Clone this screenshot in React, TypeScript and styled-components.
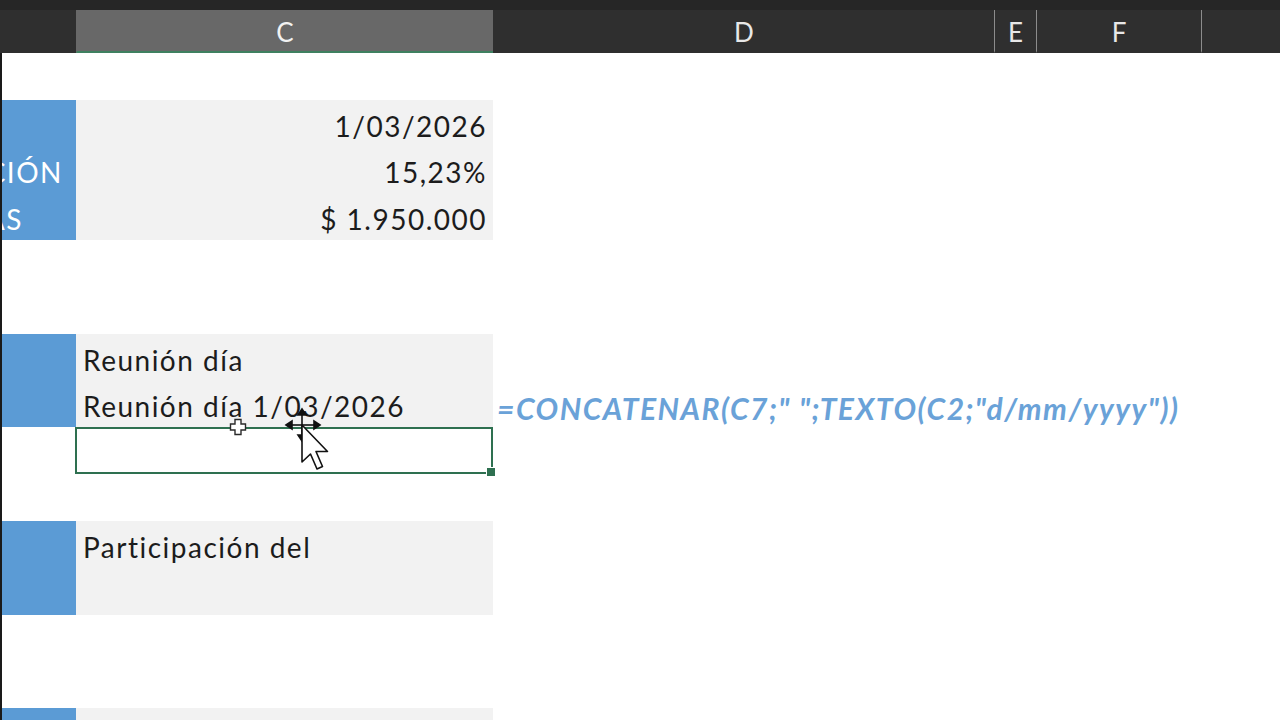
import * as React from "react";
import styled, { createGlobalStyle } from "styled-components";

const GlobalStyle = createGlobalStyle`
  html, body {
    margin: 0;
    padding: 0;
    background: #ffffff;
  }
  body {
    font-family: Lato, "Open Sans", "Liberation Sans", sans-serif;
  }
`;

const HEAD_COLUMNS = "76px 417px 501px 42px 165px 1fr";
// the sheet has a 2px black edge on the left, so its first column is 2px narrower
const SHEET_COLUMNS = "74px 417px 501px 42px 165px 1fr";
const ROW_HEIGHT = 46.8;

const Frame = styled.div`
  position: relative;
  width: 1280px;
  height: 720px;
  overflow: hidden;
  background: #ffffff;
`;

const HeaderBar = styled.div`
  display: flex;
  flex-direction: column;
  height: 53px;
  background: #2f2f2f;
`;

const TopStrip = styled.div`
  height: 10px;
  background: #262626;
`;

const HeaderRow = styled.div`
  flex: 1;
  display: grid;
  grid-template-columns: ${HEAD_COLUMNS};
`;

const ColumnHead = styled.div<{ selected?: boolean; divider?: boolean }>`
  display: flex;
  align-items: center;
  justify-content: center;
  font-family: Lato, "Open Sans", sans-serif;
  font-size: 26px;
  color: ${(p) => (p.selected ? "#f2f2f2" : "#e8e8e8")};
  background: ${(p) => (p.selected ? "#686868" : "transparent")};
  border-left: ${(p) => (p.divider ? "1px solid #8c8c8c" : "1px solid transparent")};
  border-bottom: 2px solid ${(p) => (p.selected ? "#3f8060" : "transparent")};
  box-sizing: border-box;
  padding-top: 2px;
`;

const Sheet = styled.div`
  position: relative;
  border-left: 2px solid #1a1a1a;
  height: 667px;
`;

const Row = styled.div`
  display: grid;
  grid-template-columns: ${SHEET_COLUMNS};
  height: ${ROW_HEIGHT}px;
`;

const LabelCell = styled.div<{ filled?: boolean; padRight?: number }>`
  display: flex;
  align-items: flex-end;
  justify-content: flex-end;
  padding: 0 ${(p) => p.padRight ?? 0}px 5px 0;
  overflow: hidden;
  white-space: nowrap;
  background: ${(p) => (p.filled ? "#5b9bd5" : "transparent")};
  color: #ffffff;
  font-size: 28px;
  letter-spacing: 1.5px;
  line-height: 32px;
`;

const ValueCell = styled.div<{ filled?: boolean; align?: "left" | "right"; selected?: boolean }>`
  position: relative;
  display: flex;
  align-items: flex-end;
  justify-content: ${(p) => (p.align === "right" ? "flex-end" : "flex-start")};
  padding: 0 6px 5px 7px;
  white-space: nowrap;
  box-sizing: border-box;
  background: ${(p) => (p.filled ? "#f2f2f2" : "transparent")};
  border: ${(p) => (p.selected ? "2px solid #2e7050" : "none")};
  margin-left: ${(p) => (p.selected ? "-1px" : "0")};
  color: #1c1c1c;
  font-size: 28px;
  letter-spacing: 1.5px;
  line-height: 32px;
`;

const FillHandle = styled.span`
  position: absolute;
  right: -5px;
  bottom: -5px;
  width: 8px;
  height: 8px;
  background: #2e7050;
  border: 1px solid #ffffff;
`;

const FormulaCell = styled.div`
  display: flex;
  align-items: flex-end;
  padding: 0 0 3px 4px;
  white-space: nowrap;
  overflow: visible;
  font-family: Lato, "Open Sans", sans-serif;
  font-weight: 700;
  font-style: italic;
  font-size: 30px;
  line-height: 32px;
  color: #6aa2d8;
  letter-spacing: 1.5px;
`;

const Overlay = styled.svg<{ left: number; top: number }>`
  position: absolute;
  left: ${(p) => p.left}px;
  top: ${(p) => p.top}px;
  pointer-events: none;
`;

type RowData = {
  band?: boolean;
  label?: string;
  labelPad?: number;
  value?: string;
  align?: "left" | "right";
  selected?: boolean;
  formula?: string;
};

const rows: RowData[] = [
  {},
  { band: true, value: "1/03/2026", align: "right" },
  { band: true, label: "CIÓN", labelPad: 13, value: "15,23%", align: "right" },
  { band: true, label: "AS", labelPad: 53, value: "$ 1.950.000", align: "right" },
  {},
  {},
  { band: true, value: "Reunión día" },
  {
    band: true,
    value: "Reunión día 1/03/2026",
    formula: '=CONCATENAR(C7;" ";TEXTO(C2;"d/mm/yyyy"))',
  },
  { selected: true },
  {},
  { band: true, value: "Participación del" },
  { band: true },
  {},
  {},
  { band: true },
];

function MoveCursor() {
  return (
    <Overlay left={281} top={352} width={50} height={70} viewBox="0 0 50 70">
      {/* four-way move arrows */}
      <g stroke="#111" strokeWidth="1.6" fill="#111">
        <line x1="4" y1="20" x2="36" y2="20" />
        <polygon points="3,20 9,16 9,24" />
        <polygon points="37,20 31,16 31,24" />
        <line x1="19" y1="6" x2="19" y2="34" />
        <polygon points="19,4 15,10 23,10" />
        <polygon points="19,36 15,30 23,30" />
      </g>
      {/* pointer arrow */}
      <path
        d="M19 20 L19 57 L27.5 49 L34 64 L39.5 61.5 L33 46.5 L44.5 46.5 Z"
        fill="#ffffff"
        stroke="#111"
        strokeWidth="1.6"
        strokeLinejoin="round"
      />
    </Overlay>
  );
}

function CrossCursor() {
  return (
    <Overlay left={227} top={365} width={18} height={18} viewBox="0 0 18 18">
      <path
        d="M6 1.5 H12 V6 H16.5 V12 H12 V16.5 H6 V12 H1.5 V6 H6 Z"
        fill="#ffffff"
        stroke="#2a2a2a"
        strokeWidth="1.4"
      />
    </Overlay>
  );
}

export default function App() {
  return (
    <Frame>
      <GlobalStyle />
      <HeaderBar>
        <TopStrip />
        <HeaderRow>
          <ColumnHead />
          <ColumnHead selected>C</ColumnHead>
          <ColumnHead>D</ColumnHead>
          <ColumnHead divider>E</ColumnHead>
          <ColumnHead divider>F</ColumnHead>
          <ColumnHead divider />
        </HeaderRow>
      </HeaderBar>
      <Sheet>
        {rows.map((r, i) => (
          <Row key={i}>
            <LabelCell filled={r.band} padRight={r.labelPad}>
              {r.label}
            </LabelCell>
            <ValueCell filled={r.band} align={r.align} selected={r.selected}>
              {r.value}
              {r.selected && <FillHandle />}
            </ValueCell>
            <FormulaCell>{r.formula}</FormulaCell>
            <div />
            <div />
            <div />
          </Row>
        ))}
        <CrossCursor />
        <MoveCursor />
      </Sheet>
    </Frame>
  );
}
